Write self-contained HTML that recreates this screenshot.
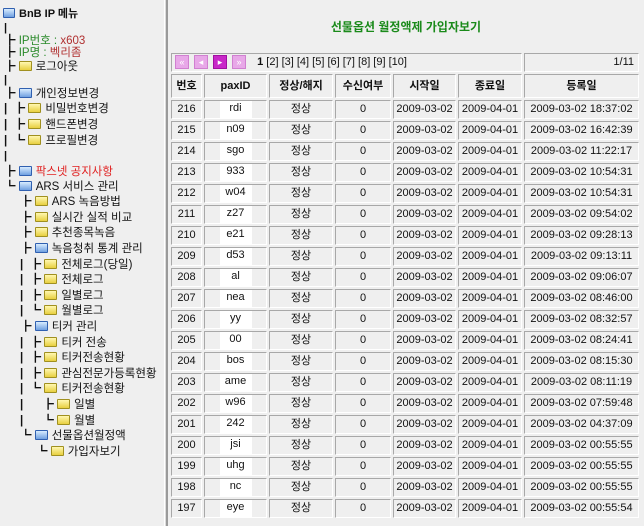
<!DOCTYPE html>
<html><head><meta charset="utf-8">
<style>
*{margin:0;padding:0;box-sizing:border-box}
body{width:644px;height:526px;background:#efefef;font-family:"Liberation Sans","Noto Sans CJK KR","NanumGothic",sans-serif;font-size:12px;color:#111;position:relative;overflow:hidden}
#left{position:absolute;left:0;top:0;width:165px;height:526px;background:#efefef}
#div{position:absolute;left:164px;top:0;width:4px;height:526px;border-left:1px solid #fff;border-right:2px solid #9a9a9a;background:#dcdcdc}
.it{position:absolute;white-space:nowrap;font-size:11.5px;line-height:14px}
.br{position:absolute;font-weight:bold;font-size:11px;line-height:14px}
.f{display:inline-block;width:13px;height:10px;vertical-align:-1px;margin-right:4px;border:1px solid #a09020;background:linear-gradient(#fff8b0,#e8d040);border-radius:1px}
.fb{border-color:#3060b0;background:linear-gradient(#d8ecff,#70a0e0)}
#title{position:absolute;left:168px;top:18px;width:476px;text-align:center;color:#1a8a1a;font-weight:bold;font-size:12px}
table{position:absolute;left:169px;top:51px;border-collapse:separate;border-spacing:2px 2px;table-layout:fixed}
td{border:1px solid;border-color:#a8a8a8 #fff #fff #a8a8a8;text-align:center;height:19px;font-size:11px;line-height:15px;padding:0;white-space:nowrap;background:#efefef;overflow:hidden}
tr.p td{height:19px}
tr.h td{height:24px;font-weight:bold}
.pb{display:inline-block;width:14px;height:14px;background:#e8a8e8;border:1px solid #d080d0;vertical-align:middle;margin-right:5px;color:#fff;font-size:9px;line-height:12px;text-align:center}
.wh{display:inline-block;background:#fff;width:32px;height:17px;vertical-align:middle;line-height:15px}
</style></head><body>
<div id="left">
<div class="it" style="left:3px;top:7px"><span class="f fb" style="width:12px"></span><b style="font-size:11px">BnB IP 메뉴</b></div>
<div class="br" style="left:4px;top:21px">|</div>
<div class="it" style="left:4px;top:34px"><b>┣</b> <span style="color:#2a8a2a">IP번호 : </span><span style="color:#b03030">x603</span></div>
<div class="it" style="left:4px;top:46px"><b>┣</b> <span style="color:#2a8a2a">IP명 : </span><span style="color:#b03030">벡리좀</span></div>
<div class="it" style="left:4px;top:60px"><b>┣</b> <span class="f"></span>로그아웃</div>
<div class="br" style="left:4px;top:73px">|</div>
<div class="it" style="left:4px;top:87px"><b>┣</b> <span class="f fb"></span>개인정보변경</div>
<div class="it" style="left:4px;top:102px"><b>|</b> &nbsp;<b>┣</b> <span class="f"></span>비밀번호변경</div>
<div class="it" style="left:4px;top:118px"><b>|</b> &nbsp;<b>┣</b> <span class="f"></span>핸드폰변경</div>
<div class="it" style="left:4px;top:134px"><b>|</b> &nbsp;<b>┗</b> <span class="f"></span>프로필변경</div>
<div class="br" style="left:4px;top:149px">|</div>
<div class="it" style="left:4px;top:165px"><b>┣</b> <span class="f fb"></span><span style="color:#e02020">팍스넷 공지사항</span></div>
<div class="it" style="left:4px;top:180px"><b>┗</b> <span class="f fb"></span>ARS 서비스 관리</div>
<div class="it" style="left:20px;top:195px"><b>┣</b> <span class="f"></span>ARS 녹음방법</div>
<div class="it" style="left:20px;top:211px"><b>┣</b> <span class="f"></span>실시간 실적 비교</div>
<div class="it" style="left:20px;top:226px"><b>┣</b> <span class="f"></span>추천종목녹음</div>
<div class="it" style="left:20px;top:242px"><b>┣</b> <span class="f fb"></span>녹음청취 통계 관리</div>
<div class="it" style="left:20px;top:258px"><b>|</b> &nbsp;<b>┣</b> <span class="f"></span>전체로그(당일)</div>
<div class="it" style="left:20px;top:273px"><b>|</b> &nbsp;<b>┣</b> <span class="f"></span>전체로그</div>
<div class="it" style="left:20px;top:289px"><b>|</b> &nbsp;<b>┣</b> <span class="f"></span>일별로그</div>
<div class="it" style="left:20px;top:304px"><b>|</b> &nbsp;<b>┗</b> <span class="f"></span>월별로그</div>
<div class="it" style="left:20px;top:320px"><b>┣</b> <span class="f fb"></span>티커 관리</div>
<div class="it" style="left:20px;top:336px"><b>|</b> &nbsp;<b>┣</b> <span class="f"></span>티커 전송</div>
<div class="it" style="left:20px;top:351px"><b>|</b> &nbsp;<b>┣</b> <span class="f"></span>티커전송현황</div>
<div class="it" style="left:20px;top:367px"><b>|</b> &nbsp;<b>┣</b> <span class="f"></span>관심전문가등록현황</div>
<div class="it" style="left:20px;top:382px"><b>|</b> &nbsp;<b>┗</b> <span class="f"></span>티커전송현황</div>
<div class="it" style="left:20px;top:398px"><b>|</b> &nbsp;&nbsp;&nbsp;&nbsp;&nbsp;<b>┣</b> <span class="f"></span>일별</div>
<div class="it" style="left:20px;top:414px"><b>|</b> &nbsp;&nbsp;&nbsp;&nbsp;&nbsp;<b>┗</b> <span class="f"></span>월별</div>
<div class="it" style="left:20px;top:429px"><b>┗</b> <span class="f fb"></span>선물옵션월정액</div>
<div class="it" style="left:36px;top:445px"><b>┗</b> <span class="f"></span>가입자보기</div>
</div>
<div id="div"></div>
<div id="title">선물옵션 월정액제 가입자보기</div>
<table>
<colgroup><col style="width:31px"><col style="width:63px"><col style="width:64px"><col style="width:56px"><col style="width:63px"><col style="width:64px"><col style="width:115px"></colgroup>
<tr class="p"><td colspan="6" style="text-align:left;padding-left:3px"><span class="pb">«</span><span class="pb">◂</span><span class="pb" style="background:#c828c8;border-color:#a010a0">▸</span><span class="pb">»</span> &nbsp;<b>1</b> [2] [3] [4] [5] [6] [7] [8] [9] [10]</td><td style="text-align:right;padding-right:4px">1/11</td></tr>
<tr class="h"><td>번호</td><td>paxID</td><td>정상/해지</td><td>수신여부</td><td>시작일</td><td>종료일</td><td>등록일</td></tr>
<tr><td>216</td><td><span class="wh">rdi</span></td><td>정상</td><td>0</td><td>2009-03-02</td><td>2009-04-01</td><td>2009-03-02 18:37:02</td></tr>
<tr><td>215</td><td><span class="wh">n09</span></td><td>정상</td><td>0</td><td>2009-03-02</td><td>2009-04-01</td><td>2009-03-02 16:42:39</td></tr>
<tr><td>214</td><td><span class="wh">sgo</span></td><td>정상</td><td>0</td><td>2009-03-02</td><td>2009-04-01</td><td>2009-03-02 11:22:17</td></tr>
<tr><td>213</td><td><span class="wh">933</span></td><td>정상</td><td>0</td><td>2009-03-02</td><td>2009-04-01</td><td>2009-03-02 10:54:31</td></tr>
<tr><td>212</td><td><span class="wh">w04</span></td><td>정상</td><td>0</td><td>2009-03-02</td><td>2009-04-01</td><td>2009-03-02 10:54:31</td></tr>
<tr><td>211</td><td><span class="wh">z27</span></td><td>정상</td><td>0</td><td>2009-03-02</td><td>2009-04-01</td><td>2009-03-02 09:54:02</td></tr>
<tr><td>210</td><td><span class="wh">e21</span></td><td>정상</td><td>0</td><td>2009-03-02</td><td>2009-04-01</td><td>2009-03-02 09:28:13</td></tr>
<tr><td>209</td><td><span class="wh">d53</span></td><td>정상</td><td>0</td><td>2009-03-02</td><td>2009-04-01</td><td>2009-03-02 09:13:11</td></tr>
<tr><td>208</td><td><span class="wh">al</span></td><td>정상</td><td>0</td><td>2009-03-02</td><td>2009-04-01</td><td>2009-03-02 09:06:07</td></tr>
<tr><td>207</td><td><span class="wh">nea</span></td><td>정상</td><td>0</td><td>2009-03-02</td><td>2009-04-01</td><td>2009-03-02 08:46:00</td></tr>
<tr><td>206</td><td><span class="wh">yy</span></td><td>정상</td><td>0</td><td>2009-03-02</td><td>2009-04-01</td><td>2009-03-02 08:32:57</td></tr>
<tr><td>205</td><td><span class="wh">00</span></td><td>정상</td><td>0</td><td>2009-03-02</td><td>2009-04-01</td><td>2009-03-02 08:24:41</td></tr>
<tr><td>204</td><td><span class="wh">bos</span></td><td>정상</td><td>0</td><td>2009-03-02</td><td>2009-04-01</td><td>2009-03-02 08:15:30</td></tr>
<tr><td>203</td><td><span class="wh">ame</span></td><td>정상</td><td>0</td><td>2009-03-02</td><td>2009-04-01</td><td>2009-03-02 08:11:19</td></tr>
<tr><td>202</td><td><span class="wh">w96</span></td><td>정상</td><td>0</td><td>2009-03-02</td><td>2009-04-01</td><td>2009-03-02 07:59:48</td></tr>
<tr><td>201</td><td><span class="wh">242</span></td><td>정상</td><td>0</td><td>2009-03-02</td><td>2009-04-01</td><td>2009-03-02 04:37:09</td></tr>
<tr><td>200</td><td><span class="wh">jsi</span></td><td>정상</td><td>0</td><td>2009-03-02</td><td>2009-04-01</td><td>2009-03-02 00:55:55</td></tr>
<tr><td>199</td><td><span class="wh">uhg</span></td><td>정상</td><td>0</td><td>2009-03-02</td><td>2009-04-01</td><td>2009-03-02 00:55:55</td></tr>
<tr><td>198</td><td><span class="wh">nc</span></td><td>정상</td><td>0</td><td>2009-03-02</td><td>2009-04-01</td><td>2009-03-02 00:55:55</td></tr>
<tr><td>197</td><td><span class="wh">eye</span></td><td>정상</td><td>0</td><td>2009-03-02</td><td>2009-04-01</td><td>2009-03-02 00:55:54</td></tr>
</table>
</body></html>
